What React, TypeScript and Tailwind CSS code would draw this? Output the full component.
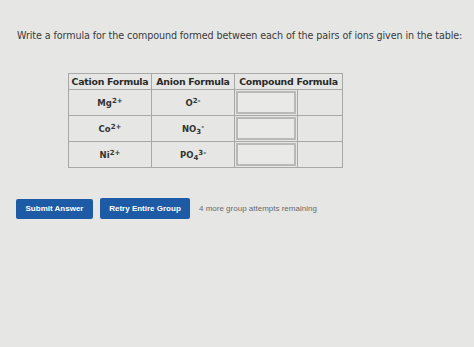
import React from 'react';

const rows = [
  { cation: ['Mg', '2+'], anion: <>O<sup className="text-[7px]">2-</sup></> },
  { cation: ['Co', '2+'], anion: <>NO<sub className="text-[7px]">3</sub><sup className="text-[7px]">-</sup></> },
  { cation: ['Ni', '2+'], anion: <>PO<sub className="text-[7px]">4</sub><sup className="text-[7px]">3-</sup></> },
];

export default function App() {
  return (
    <div className="w-[474px] h-[347px] bg-[#e6e7e4] text-[#333] overflow-hidden" style={{ fontFamily: '"DejaVu Sans", Verdana, sans-serif' }}>
      <div className="pt-[29px] pl-[17px] text-[9.6px] tracking-[-0.1px] text-[#3a3a3a]">
        Write a formula for the compound formed between each of the pairs of ions given in the table:
      </div>

      <table className="ml-[68px] mt-[30px] border-collapse border border-[#a8a8a6] text-[9.4px] table-fixed">
        <thead>
          <tr className="h-[16px]">
            <th className="w-[83px] border border-[#a8a8a6] p-0 font-bold text-[#2a2a2a] whitespace-nowrap tracking-[-0.25px]">Cation Formula</th>
            <th className="w-[83px] border border-[#a8a8a6] p-0 font-bold text-[#2a2a2a] whitespace-nowrap tracking-[-0.25px]">Anion Formula</th>
            <th colSpan={2} className="w-[107px] border border-[#a8a8a6] p-0 font-bold text-[#2a2a2a] whitespace-nowrap tracking-[-0.25px]">Compound Formula</th>
          </tr>
        </thead>
        <tbody>
          {rows.map((r, i) => (
            <tr key={i} className="h-[25px]">
              <td className="border border-[#a8a8a6] text-center align-top pt-[7px] font-bold text-[8.5px] text-[#333]">
                {r.cation[0]}<sup className="text-[7px]">{r.cation[1]}</sup>
              </td>
              <td className="border border-[#a8a8a6] text-center align-top pt-[7px] font-bold text-[8.5px] text-[#333]">
                {r.anion}
              </td>
              <td className="w-[62px] border border-[#a8a8a6] p-[1px]">
                <div className="w-[60px] h-[23px] border-2 border-[#b9b9b7] bg-[#e9eae7]" />
              </td>
              <td className="w-[45px] border border-[#a8a8a6]" />
            </tr>
          ))}
        </tbody>
      </table>

      <div className="flex items-center mt-[30px] ml-[16px]" style={{ fontFamily: '"Liberation Sans", Arial, sans-serif' }}>
        <button className="w-[77px] h-[20px] bg-[#1d5ba6] text-white text-[8px] font-bold rounded-[2px]">Submit Answer</button>
        <button className="ml-[7px] w-[90px] h-[21px] bg-[#1d5ba6] text-white text-[8px] font-bold rounded-[2px]">Retry Entire Group</button>
        <span className="ml-[9px] text-[8px] text-[#6a6a6a]">4 more group attempts remaining</span>
      </div>
    </div>
  );
}
